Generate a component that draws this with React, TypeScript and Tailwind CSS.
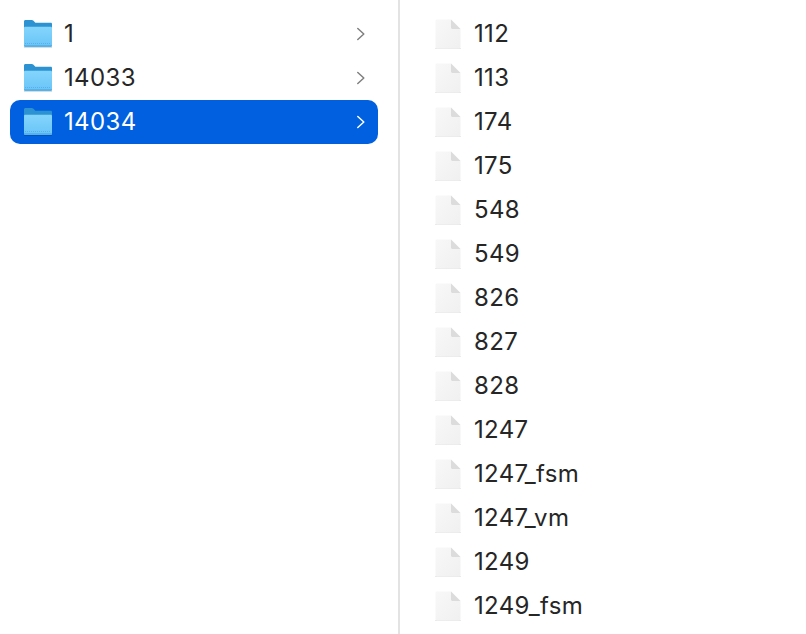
const folders = ['1', '14033', '14034'];
const files = ['112', '113', '174', '175', '548', '549', '826', '827', '828', '1247', '1247_fsm', '1247_vm', '1249', '1249_fsm'];

function FolderIcon() {
  return (
    <svg width="30" height="30" viewBox="0 0 30 30" className="shrink-0">
      <defs>
        <linearGradient id="folderFront" x1="0" y1="0" x2="0" y2="1">
          <stop offset="0" stopColor="#84d5fc" />
          <stop offset="1" stopColor="#68c4f7" />
        </linearGradient>
      </defs>
      <path d="M1 28.500h28" stroke="#000" strokeOpacity="0.14" strokeWidth="1" />
      <path d="M1 2.500C1 1.700 1.600 1 2.500 1h6.300c.6 0 1 .2 1.400.6L12.400 3.800h15.400c.7 0 1.200.5 1.200 1.200V12H1z" fill="#2c92d2" />
      <path d="M1 9c0-.8.600-1.300 1.300-1.300h25.400c.7 0 1.300.5 1.300 1.300v17.500c0 .9-.6 1.500-1.500 1.500h-25c-.9 0-1.500-.6-1.500-1.500z" fill="url(#folderFront)" />
      <path d="M1 26h28v.5c0 .9-.6 1.500-1.500 1.500h-25c-.9 0-1.500-.6-1.500-1.500z" fill="#58b2ea" />
      <path d="M2 24.500h26" stroke="#58b0e8" strokeWidth="1" strokeDasharray="1 1" />
    </svg>
  );
}

function FileIcon() {
  return (
    <svg width="26" height="30" viewBox="0 0 26 30" className="shrink-0">
      <defs>
        <linearGradient id="fileBody" x1="0" y1="0" x2="1" y2="1">
          <stop offset="0" stopColor="#f8f8f8" />
          <stop offset="1" stopColor="#f0f0f0" />
        </linearGradient>
      </defs>
      <path d="M.500 29.300c.2.400.6.700 1.200.7h22.600c.6 0 1-.3 1.200-.7" fill="none" stroke="#cfcfcf" strokeWidth="1" />
      <path d="M.500 2C.500 1.200 1.100.6 1.900.6H16L25.500 10v18c0 .8-.6 1.400-1.400 1.400H1.900c-.8 0-1.400-.6-1.400-1.400z" fill="url(#fileBody)" />
      <path d="M16 .600 25.500 10h-8c-.8 0-1.500-.7-1.500-1.500z" fill="#dcdcdc" />
    </svg>
  );
}

function Chevron({ active }: { active: boolean }) {
  return (
    <svg width="10" height="16" viewBox="0 0 10 16" className="-mt-[1px] shrink-0" fill="none" stroke={active ? '#ffffff' : '#7f7f7f'} strokeWidth="1.500" strokeLinecap="round" strokeLinejoin="round">
      <path d="M1.800 2.500 7.800 8 1.800 13.500" />
    </svg>
  );
}

export default function App() {
  return (
    <div className="flex h-[634px] w-[806px] overflow-hidden bg-white font-['Inter',sans-serif] text-[24px] tracking-[0.35px] text-[#262626]">
      <div className="w-[398px] shrink-0 px-[10px] pt-[12px]">
        {folders.map((name) => {
          const active = name === '14034';
          return (
            <div
              key={name}
              className={
                active
                  ? 'flex h-[44px] w-[368px] items-center rounded-[10px] bg-[#0060df] pl-[13px] pr-[12px] text-white'
                  : 'flex h-[44px] w-[368px] items-center pl-[13px] pr-[12px]'
              }
            >
              <FolderIcon />
              <span className="ml-[11px] flex-1">{name}</span>
              <Chevron active={active} />
            </div>
          );
        })}
      </div>
      <div className="w-[2px] shrink-0 bg-[#e3e3e3]" />
      <div className="flex-1 pl-[35px] pt-[12px]">
        {files.map((name) => (
          <div key={name} className="flex h-[44px] items-center">
            <FileIcon />
            <span className="ml-[13px]">{name}</span>
          </div>
        ))}
      </div>
    </div>
  );
}
